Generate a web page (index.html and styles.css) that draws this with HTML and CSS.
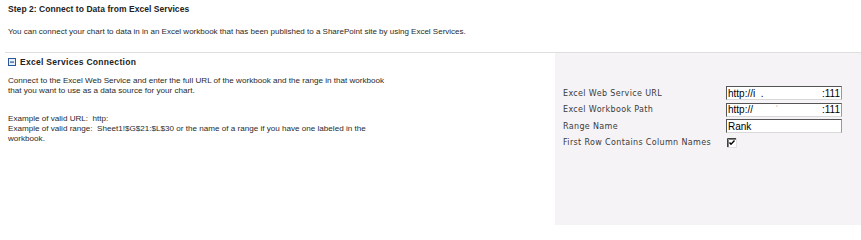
FILE: index.html
```html
<!DOCTYPE html>
<html>
<head>
<meta charset="utf-8">
<link rel="stylesheet" href="styles.css">
</head>
<body>
<div class="page">
  <div class="intro">
    <h2 class="step-title">Step 2: Connect to Data from Excel Services</h2>
    <p class="step-desc">You can connect your chart to data in in an Excel workbook that has been published to a SharePoint site by using Excel Services.</p>
  </div>
  <div class="section">
    <div class="section-left">
      <div class="section-head">
        <svg class="collapse-icon" width="8" height="8" viewBox="0 0 8 8"><rect x="0.5" y="0.5" width="7" height="7" fill="#e8eef7" stroke="#2b579a"/><rect x="2" y="3.5" width="4" height="1.2" fill="#2b579a"/></svg>
        <span>Excel Services Connection</span>
      </div>
      <p class="help">Connect to the Excel Web Service and enter the full URL of the workbook and the range in that workbook<br>that you want to use as a data source for your chart.</p>
      <p class="help examples">Example of valid URL:&nbsp; http:<br>Example of valid range:&nbsp; Sheet1!$G$21:$L$30 or the name of a range if you have one labeled in the<br>workbook.</p>
    </div>
    <div class="section-right">
      <div class="form-grid">
        <div class="label">Excel Web Service URL</div>
        <div class="textbox"><span>http://i &nbsp;.</span><span>:111</span></div>
        <div class="label">Excel Workbook Path</div>
        <div class="textbox"><span>http:// <span class="faint">&nbsp; &nbsp; &nbsp; &nbsp;ˈ</span></span><span>:111</span></div>
        <div class="label">Range Name</div>
        <div class="textbox"><span>Rank</span></div>
        <div class="label">First Row Contains Column Names</div>
        <div class="check-cell">
          <svg width="10" height="10" viewBox="0 0 10 10"><rect x="0" y="0" width="10" height="10" fill="#fff"/><path d="M0.5 10V0.5H10" fill="none" stroke="#404040"/><path d="M1.5 9V1.5H9" fill="none" stroke="#808080"/><path d="M9.5 0V9.5H0" fill="none" stroke="#e0e0e0"/><path d="M2.5 4.5L4 6.2L7.5 2.6" fill="none" stroke="#000" stroke-width="1.4"/></svg>
        </div>
      </div>
    </div>
  </div>
</div>
</body>
</html>
```

FILE: styles.css
```css
html, body {
  margin: 0;
  padding: 0;
  background: #ffffff;
}
.page {
  width: 861px;
  height: 225px;
  overflow: hidden;
  font-family: "Liberation Sans", Arial, sans-serif;
  color: #2a2a2a;
}
.intro {
  padding: 4px 8px 0 8px;
  height: 48px;
  box-sizing: border-box;
}
.step-title {
  margin: 0;
  font-size: 8.5px;
  letter-spacing: 0.05px;
  font-weight: bold;
  line-height: 10px;
  color: #222;
}
.step-desc {
  margin: 13px 0 0 0;
  font-size: 8px;
  line-height: 10px;
  color: #2a2a2a;
}
.section {
  margin-left: 5px;
  margin-top: 4px;
  border-top: 1px solid #dedede;
  display: flex;
  height: 172px;
}
.section-left {
  width: 550px;
  padding: 4px 0 0 3px;
  box-sizing: border-box;
}
.section-head {
  display: flex;
  align-items: center;
  gap: 4px;
  font-size: 8.5px;
  letter-spacing: 0.3px;
  font-weight: bold;
  line-height: 10px;
  color: #222;
}
.collapse-icon {
  display: block;
}
.help {
  margin: 9px 0 0 0;
  font-size: 8.1px;
  line-height: 10px;
  color: #2a2a2a;
}
.help.examples {
  margin-top: 18px;
}
.section-right {
  flex: 1;
  background: #f6f3f6;
  padding: 32px 0 0 8px;
}
.form-grid {
  display: grid;
  grid-template-columns: 163px 116px;
  grid-auto-rows: 16.5px;
  align-items: center;
}
.label {
  font-family: "DejaVu Sans", Verdana, sans-serif;
  font-size: 8px;
  letter-spacing: 0.35px;
  color: #3a3a3a;
}
.textbox {
  height: 14px;
  box-sizing: border-box;
  background: #fff;
  border-top: 1px solid #555;
  border-left: 1px solid #555;
  border-right: 1px solid #999;
  border-bottom: 1px solid #d8d8d8;
  display: flex;
  justify-content: space-between;
  align-items: center;
  padding: 0 1px 0 1px;
  font-family: "Liberation Sans", Arial, sans-serif;
  font-size: 10px;
  color: #000;
  white-space: pre;
}
.faint {
  color: #999;
}
.check-cell {
  padding-left: 1px;
  display: flex;
  align-items: center;
}
.check-cell svg {
  display: block;
}
```
